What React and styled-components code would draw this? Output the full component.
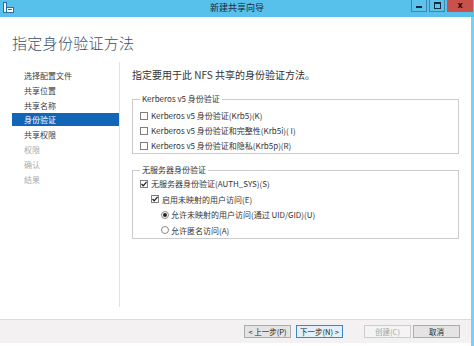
import React from "react";
import styled, { createGlobalStyle } from "styled-components";

const GlobalStyle = createGlobalStyle`
  html, body {
    margin: 0;
    padding: 0;
    background: #ffffff;
  }
  body {
    font-family: "Noto Sans CJK SC", "Noto Sans", sans-serif;
    color: #333;
  }
`;

const steps = [
  { label: "选择配置文件" },
  { label: "共享位置" },
  { label: "共享名称" },
  { label: "身份验证", active: true },
  { label: "共享权限" },
  { label: "权限", disabled: true },
  { label: "确认", disabled: true },
  { label: "结果", disabled: true },
];

function AppIcon() {
  return (
    <svg width="11" height="11" viewBox="0 0 11 11">
      <rect x="0.5" y="0.5" width="3" height="10" fill="#e8f4fb" stroke="#2d6fa0" strokeWidth="1" />
      <rect x="3.5" y="5.5" width="7" height="5" fill="#ffffff" stroke="#2d6fa0" strokeWidth="1" />
      <rect x="5" y="7" width="4" height="1" fill="#2d6fa0" />
    </svg>
  );
}

function CheckMark() {
  return (
    <svg width="8" height="8" viewBox="0 0 8 8">
      <path d="M1.5 4 L3.2 5.8 L6.6 1.8" fill="none" stroke="#222" strokeWidth="1.3" />
    </svg>
  );
}

function Check({ checked, children, indent }) {
  return (
    <Row indent={indent}>
      <Box>{checked && <CheckMark />}</Box>
      <span>{children}</span>
    </Row>
  );
}

function Radio({ checked, children, indent }) {
  return (
    <Row indent={indent} $radio>
      <Circle>{checked && <Dot />}</Circle>
      <span>{children}</span>
    </Row>
  );
}

export default function App() {
  return (
    <>
      <GlobalStyle />
      <Window>
        <TitleBar>
          <IconWrap>
            <AppIcon />
          </IconWrap>
          <Title>新建共享向导</Title>
          <Controls>
            <CtrlButton>
              <MinGlyph />
            </CtrlButton>
            <CtrlButton>
              <MaxGlyph />
            </CtrlButton>
            <CloseButton>x</CloseButton>
          </Controls>
        </TitleBar>
        <Frame>
          <Main>
            <Heading>指定身份验证方法</Heading>
            <Body>
              <Nav>
                {steps.map((s) => (
                  <NavItem key={s.label} active={s.active} disabled={s.disabled}>
                    {s.label}
                  </NavItem>
                ))}
              </Nav>
              <Content>
                <Intro>指定要用于此 NFS 共享的身份验证方法。</Intro>
                <Group top={4} rowh={15}>
                  <Legend>Kerberos v5 身份验证</Legend>
                  <Check>Kerberos v5 身份验证(Krb5)(K)</Check>
                  <Check>Kerberos v5 身份验证和完整性(Krb5i)( I)</Check>
                  <Check>Kerberos v5 身份验证和隐私(Krb5p)(R)</Check>
                </Group>
                <Group top={1} gap={11} rowh={15.5}>
                  <Legend>无服务器身份验证</Legend>
                  <Check checked>无服务器身份验证(AUTH_SYS)(S)</Check>
                  <Check checked indent={11}>启用未映射的用户访问(E)</Check>
                  <Radio checked indent={21}>允许未映射的用户访问(通过 UID/GID)(U)</Radio>
                  <Radio indent={21}>允许匿名访问(A)</Radio>
                </Group>
              </Content>
            </Body>
          </Main>
          <Footer>
            <Button>&lt; 上一步(P)</Button>
            <Button primary>下一步(N) &gt;</Button>
            <Button disabled spaced>创建(C)</Button>
            <Button>取消</Button>
          </Footer>
        </Frame>
      </Window>
    </>
  );
}

const Window = styled.div`
  width: 474px;
  height: 346px;
  display: flex;
  flex-direction: column;
  overflow: hidden;
  background: #ffffff;
`;

const TitleBar = styled.div`
  height: 17px;
  flex: none;
  background: #57c1eb;
  display: flex;
  align-items: flex-start;
  position: relative;
`;

const IconWrap = styled.div`
  padding: 2px 0 0 3px;
  display: flex;
`;

const Title = styled.div`
  position: absolute;
  left: 0;
  right: 0;
  top: 2px;
  text-align: center;
  font-size: 9px;
  line-height: 12px;
  color: #1a2a38;
`;

const Controls = styled.div`
  margin-left: auto;
  display: flex;
  gap: 2px;
  padding-right: 1px;
  position: relative;
`;

const CtrlButton = styled.div`
  width: 16px;
  height: 12px;
  box-sizing: border-box;
  border: 1px solid #3f86ae;
  border-top: none;
  background: #5bc3ec;
  display: flex;
  align-items: center;
  justify-content: center;
`;

const MinGlyph = styled.div`
  width: 6px;
  height: 2px;
  background: #1b2b3a;
  margin-top: 3px;
`;

const MaxGlyph = styled.div`
  width: 5px;
  height: 4px;
  border: 1.5px solid #1b2b3a;
  border-top-width: 2px;
`;

const CloseButton = styled.div`
  width: 26px;
  height: 12px;
  background: #c8514c;
  color: #2a0b0b;
  font-family: "DejaVu Sans", sans-serif;
  font-weight: bold;
  font-size: 8px;
  line-height: 11px;
  text-align: center;
`;

const Frame = styled.div`
  flex: 1;
  display: flex;
  flex-direction: column;
  border-right: 3px solid #7fd0f0;
  padding-bottom: 3px;
`;

const Main = styled.div`
  flex: 1;
  display: flex;
  flex-direction: column;
  padding-top: 15px;
`;

const Heading = styled.div`
  font-size: 15px;
  font-weight: 300;
  line-height: 22px;
  padding-left: 12px;
  color: #3a4e66;
  letter-spacing: 0.3px;
`;

const Body = styled.div`
  display: flex;
  margin-top: 8px;
  height: 245px;
`;

const Nav = styled.div`
  width: 107px;
  padding: 7px 0 0 12px;
  border-right: 1px solid #e2e2e2;
  display: flex;
  flex-direction: column;
  gap: 1.8px;
`;

const NavItem = styled.div`
  height: 13px;
  line-height: 13px;
  padding-left: 12px;
  font-size: 8px;
  color: ${(p) => (p.active ? "#ffffff" : p.disabled ? "#ababab" : "#3c3c3c")};
  background: ${(p) => (p.active ? "#1266b8" : "transparent")};
`;

const Content = styled.div`
  flex: 1;
  padding: 6px 12px 0 12px;
  display: flex;
  flex-direction: column;
`;

const Intro = styled.div`
  font-size: 10px;
  line-height: 14px;
  color: #333;
`;

const Group = styled.fieldset`
  margin: ${(p) => (p.gap ? p.gap : 12)}px 0 0 0;
  padding: ${(p) => p.top}px 0 0 7px;
  border: 1px solid #cbcbcb;
  min-width: 0;
  display: flex;
  flex-direction: column;
  & > div {
    height: ${(p) => p.rowh}px;
  }
`;

const Legend = styled.legend`
  padding: 0 2px;
  font-size: 8px;
  line-height: 10px;
  color: #333;
`;

const Row = styled.div`
  display: flex;
  align-items: center;
  padding-left: ${(p) => p.indent || 0}px;
  gap: ${(p) => (p.$radio ? 2 : 3)}px;
  font-size: 8px;
  color: #333;
  white-space: nowrap;
`;

const Box = styled.div`
  width: 8px;
  height: 8px;
  box-sizing: border-box;
  border: 1px solid #7f7f7f;
  background: #fff;
  display: flex;
  align-items: center;
  justify-content: center;
  flex: none;
  svg {
    margin: -1px;
  }
`;

const Circle = styled.div`
  width: 8px;
  height: 8px;
  box-sizing: border-box;
  border: 1px solid #8a8a8a;
  border-radius: 50%;
  background: #fff;
  display: flex;
  align-items: center;
  justify-content: center;
  flex: none;
`;

const Dot = styled.div`
  width: 4px;
  height: 4px;
  border-radius: 50%;
  background: #222;
`;

const Footer = styled.div`
  height: 23px;
  flex: none;
  border-top: 1px solid #dadada;
  background: #f3f1f1;
  display: flex;
  align-items: center;
  justify-content: flex-end;
  padding-right: 11px;
  gap: 5px;
`;

const Button = styled.div`
  width: 47px;
  height: 13px;
  box-sizing: border-box;
  margin-left: ${(p) => (p.spaced ? 16 : 0)}px;
  margin-right: ${(p) => (p.spaced ? -3 : 0)}px;
  border: 1px solid ${(p) => (p.primary ? "#3d86c4" : p.disabled ? "#cdcdcd" : "#acacac")};
  background: ${(p) => (p.primary ? "#e3effa" : p.disabled ? "#f4f4f4" : "#e4e4e4")};
  color: ${(p) => (p.disabled ? "#a3a3a3" : "#222")};
  font-size: 7.5px;
  line-height: 11px;
  text-align: center;
  white-space: nowrap;
`;
